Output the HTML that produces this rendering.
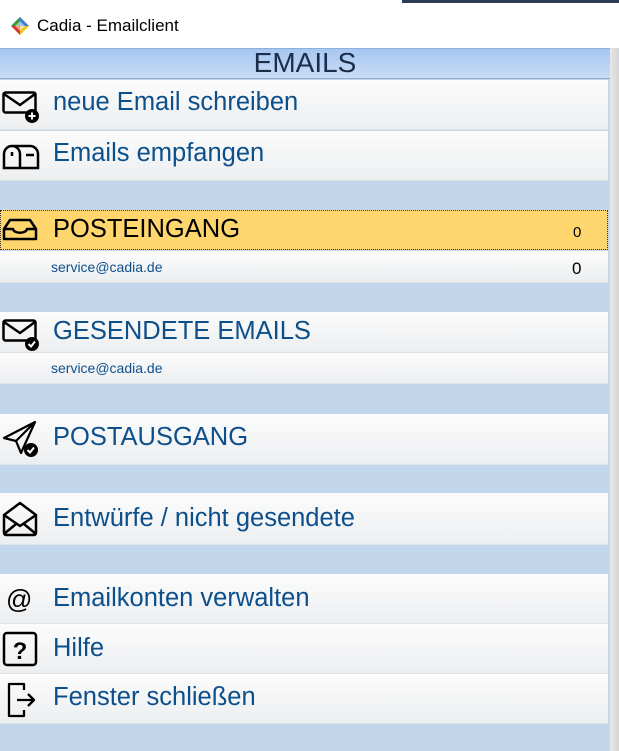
<!DOCTYPE html>
<html><head><meta charset="utf-8"><style>
*{margin:0;padding:0;box-sizing:border-box}
body{width:619px;height:751px;overflow:hidden;background:#fff;font-family:"Liberation Sans","DejaVu Sans",sans-serif;position:relative}
.a{position:absolute}
.row{position:absolute;left:0;width:608px;background:linear-gradient(#fcfcfc,#eceef0);border-bottom:1px solid #dde3ea}
.gap{position:absolute;left:0;width:610px;background:#c3d7ec}
.t{position:absolute;left:53px;color:#0d4f8b;font-size:25.5px;white-space:nowrap}
.s{position:absolute;left:51px;color:#0d4f8b;font-size:14px}
svg{position:absolute;left:2px}
</style></head><body>
<div class="a" style="left:402px;top:0;width:217px;height:3px;background:#2c3e55"></div>
<svg style="left:10px;top:16px" width="20" height="20" viewBox="0 0 20 20"><path d="M10 1L19 10H1Z" fill="#3a7bd5"/><path d="M1 10L10 10L10 19Z" fill="#d9342b"/><path d="M19 10L10 10L10 19Z" fill="#f0c419"/><path d="M10 1L1 10h9z" fill="#3a9a3a"/><path d="M10 5l5 5-5 5-5-5z" fill="#fff" opacity=".5"/></svg>
<div class="a" style="left:37px;top:16px;font-size:17px;color:#000">Cadia - Emailclient</div>
<div class="a" style="left:610px;top:48px;width:9px;height:703px;background:linear-gradient(90deg,#e8e8e8,#d4d4d4)"></div>
<div class="a" style="left:0;top:48px;width:610px;height:31px;background:linear-gradient(#a6c6f2,#c9dcf4);border-top:1px solid #8fb0d8;border-bottom:1px solid #90aed0"></div>
<div class="a" style="left:0;top:47px;width:610px;text-align:center;font-size:28px;color:#1a2e4a;line-height:31px">EMAILS</div>
<div class="gap" style="top:79px;height:672px"></div>

<div class="row" style="top:80px;height:50px"></div>
<svg style="top:90px" width="38" height="34" viewBox="0 0 38 34"><rect x="1.5" y="2.5" width="32" height="20" rx="2" fill="none" stroke="#000" stroke-width="2.5"/><path d="M2 4l16 11L33 4" fill="none" stroke="#000" stroke-width="2.5"/><circle cx="30" cy="26" r="7" fill="#000"/><path d="M30 22.5v7M26.5 26h7" stroke="#fff" stroke-width="2"/></svg>
<div class="t" style="top:88px">neue Email schreiben</div>

<div class="row" style="top:131px;height:50px"></div>
<svg style="top:144px" width="38" height="26" viewBox="0 0 38 26"><path d="M2 24V10a8 8 0 0 1 16 0v14zM10 2h18a8 8 0 0 1 8 8v14H18" fill="none" stroke="#000" stroke-width="2.5"/><path d="M10 8v4M24 11h8" stroke="#000" stroke-width="2.5"/></svg>
<div class="t" style="top:139px">Emails empfangen</div>

<div class="row" style="top:210px;height:40px;background:#ffd56e;border:1px dotted #333"></div>
<svg style="top:218px" width="36" height="24" viewBox="0 0 36 24"><path d="M2 11L8 2h20l6 9v10H2zM2 11h9c1 5 13 5 14 0h9" fill="none" stroke="#000" stroke-width="2.5" stroke-linejoin="round"/></svg>
<div class="t" style="top:215px;color:#000">POSTEINGANG</div>
<div class="a" style="left:573px;top:224px;font-size:15px;color:#000">0</div>
<div class="row" style="top:251px;height:32px"></div>
<div class="s" style="top:259px">service@cadia.de</div>
<div class="a" style="left:572px;top:259px;font-size:17px;color:#000">0</div>

<div class="row" style="top:312px;height:41px"></div>
<svg style="top:318px" width="38" height="34" viewBox="0 0 38 34"><rect x="1.5" y="2.5" width="32" height="20" rx="2" fill="none" stroke="#000" stroke-width="2.5"/><path d="M2 4l16 11L33 4" fill="none" stroke="#000" stroke-width="2.5"/><circle cx="30" cy="26" r="7" fill="#000"/><path d="M26.5 26l2.5 2.5 4-5" fill="none" stroke="#fff" stroke-width="2"/></svg>
<div class="t" style="top:317px">GESENDETE EMAILS</div>
<div class="row" style="top:353px;height:31px"></div>
<div class="s" style="top:360px">service@cadia.de</div>

<div class="row" style="top:414px;height:51px"></div>
<svg style="top:420px" width="38" height="38" viewBox="0 0 38 38"><path d="M33 2L2 18l12 3 5 12zM33 2L14 21" fill="none" stroke="#000" stroke-width="2.2" stroke-linejoin="round"/><circle cx="29" cy="30" r="7" fill="#000"/><path d="M25.5 30l2.5 2.5 4-5" fill="none" stroke="#fff" stroke-width="2"/></svg>
<div class="t" style="top:423px">POSTAUSGANG</div>

<div class="row" style="top:493px;height:52px"></div>
<svg style="top:501px" width="38" height="36" viewBox="0 0 38 36"><path d="M2 14L18 2l16 12v18a2 2 0 0 1-2 2H4a2 2 0 0 1-2-2zM2 14l16 11 16-11M2 33l12-10M34 33L22 23" fill="none" stroke="#000" stroke-width="2.5" stroke-linejoin="round"/></svg>
<div class="t" style="top:504px">Entwürfe / nicht gesendete</div>

<div class="row" style="top:574px;height:50px"></div>
<div class="a" style="left:6px;top:584px;font-size:26px;color:#000">@</div>
<div class="t" style="top:584px">Emailkonten verwalten</div>
<div class="row" style="top:624px;height:50px"></div>
<svg style="top:631px" width="36" height="38" viewBox="0 0 36 38"><rect x="2" y="2" width="32" height="32" rx="3" fill="none" stroke="#000" stroke-width="2.5"/><text x="18" y="28" font-size="24" font-family="Liberation Sans" font-weight="bold" text-anchor="middle">?</text></svg>
<div class="t" style="top:634px">Hilfe</div>
<div class="row" style="top:674px;height:50px"></div>
<svg style="top:682px" width="36" height="38" viewBox="0 0 36 38"><path d="M22 8V2H7v32h15v-6M15 18h17M26 12l6 6-6 6" fill="none" stroke="#000" stroke-width="2.3" stroke-linejoin="round"/></svg>
<div class="t" style="top:683px">Fenster schließen</div>
</body></html>
